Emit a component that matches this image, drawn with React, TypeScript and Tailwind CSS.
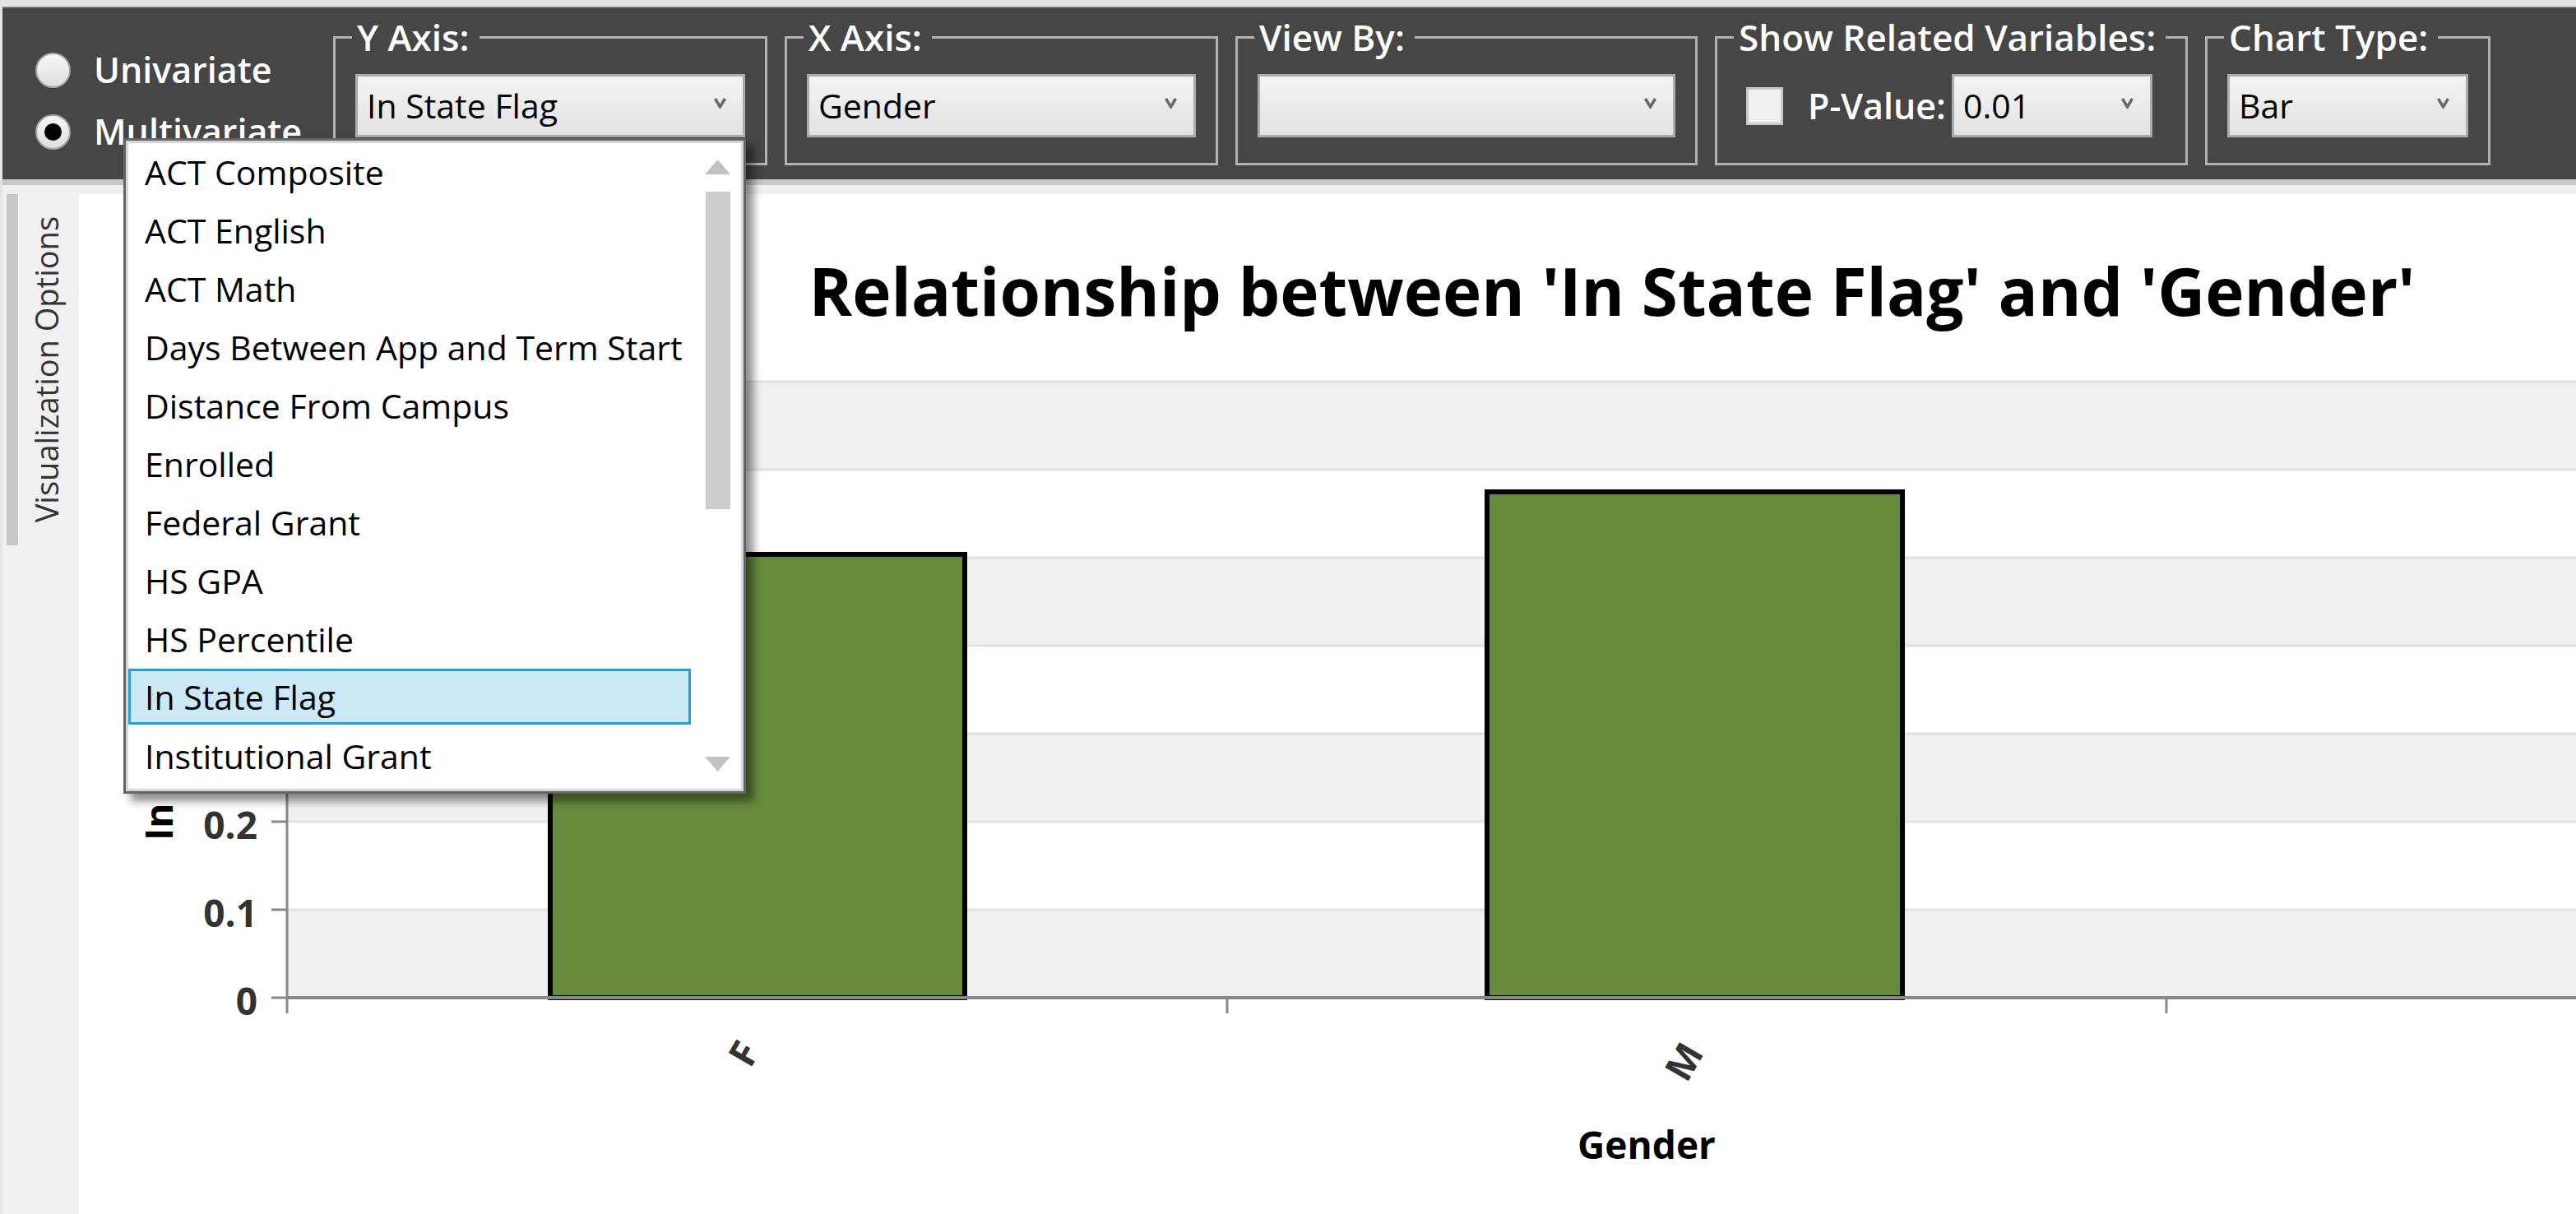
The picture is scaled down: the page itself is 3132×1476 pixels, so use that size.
import React from "react";

const items = [
  "ACT Composite",
  "ACT English",
  "ACT Math",
  "Days Between App and Term Start",
  "Distance From Campus",
  "Enrolled",
  "Federal Grant",
  "HS GPA",
  "HS Percentile",
  "In State Flag",
  "Institutional Grant",
];

function Chevron() {
  return (
    <svg width="15" height="14" viewBox="0 0 15 14" className="mb-[8px] shrink-0">
      <polyline points="1.5,2 7.5,12 13.5,2" fill="none" stroke="#6a6a6a" strokeWidth="3.5" />
    </svg>
  );
}

function Combo({ value, className }: { value: string; className?: string }) {
  return (
    <div
      className={
        "h-[77px] border-[3px] border-[#acacac] bg-gradient-to-b from-[#f3f3f3] to-[#e3e3e3] flex items-center pl-[11px] pr-[20px] " +
        (className ?? "")
      }
    >
      <span className="flex-1 text-[41px] leading-none text-black whitespace-nowrap">{value}</span>
      <Chevron />
    </div>
  );
}

function Group({ title, width, children }: { title: string; width: string; children: React.ReactNode }) {
  return (
    <fieldset className={"border-[3px] border-[#b2b2b2] " + width}>
      <legend className="ml-[20px] pl-[6px] pr-[12px] text-[44px] font-semibold leading-[56px] text-white whitespace-nowrap">
        {title}
      </legend>
      <div className="mt-[17px] mb-[31px]">{children}</div>
    </fieldset>
  );
}

function Radio({ checked, label }: { checked?: boolean; label: string }) {
  return (
    <div className="flex items-center gap-[28px] h-[56px]">
      <div className="w-[43px] h-[43px] rounded-full border-[2px] border-[#a4a4a4] bg-gradient-to-b from-[#f8f8f8] to-[#dedede] flex items-center justify-center">
        {checked && <div className="w-[21px] h-[21px] rounded-full bg-black" />}
      </div>
      <span className="text-[43px] font-semibold leading-[56px] text-white whitespace-nowrap">{label}</span>
    </div>
  );
}

function Toolbar() {
  return (
    <div className="h-[211px] border-t-2 border-[#c6c6c6] bg-[#464646] flex items-start">
      <div className="w-[402px] pl-[40px] pt-[48px] flex flex-col gap-[19px]">
        <Radio label="Univariate" />
        <Radio label="Multivariate" checked />
      </div>
      <div className="mt-[8px] flex items-start gap-[21px]">
        <Group title="Y Axis:" width="w-[528px]">
          <div className="mx-[24px]">
            <Combo value="In State Flag" />
          </div>
        </Group>
        <Group title="X Axis:" width="w-[527px]">
          <div className="mx-[24px]">
            <Combo value="Gender" />
          </div>
        </Group>
        <Group title="View By:" width="w-[562px]">
          <div className="mx-[24px]">
            <Combo value="" />
          </div>
        </Group>
        <Group title="Show Related Variables:" width="w-[575px]">
          <div className="flex items-center pl-[35px] pr-[40px]">
            <div className="w-[45px] h-[46px] border-[3px] border-[#c9c9c9] bg-[#f0f0f0] shrink-0" />
            <span className="ml-[30px] text-[43px] font-semibold leading-[56px] text-white whitespace-nowrap">
              P-Value:
            </span>
            <Combo value="0.01" className="ml-auto w-[244px] shrink-0" />
          </div>
        </Group>
        <Group title="Chart Type:" width="w-[347px]">
          <div className="mx-[24px]">
            <Combo value="Bar" />
          </div>
        </Group>
      </div>
    </div>
  );
}

const Y0 = 749;
const U = 107;
const yv = (v: number) => Y0 - v * 10 * U;

function Chart() {
  const bands = [0, 1, 2, 3, 4, 5, 6];
  const lines = [1, 2, 3, 4, 5, 6, 7];
  const ticks = [0, 1, 2, 3, 4, 5, 6, 7];
  const labels = ["0", "0.1", "0.2"];
  return (
    <svg width="3036" height="1012" viewBox="0 0 3036 1012" className="block overflow-visible">
      {bands.map((k) => (
        <rect
          key={"b" + k}
          x={253}
          y={yv((k + 1) / 10)}
          width={3600}
          height={U}
          fill={k % 2 === 0 ? "#f0f0f0" : "#ffffff"}
        />
      ))}
      {lines.map((k) => (
        <line key={"g" + k} x1={253} x2={3853} y1={yv(k / 10)} y2={yv(k / 10)} stroke="#e2e2e2" strokeWidth={3} />
      ))}
      <rect x={573} y={210} width={504} height={539} fill="#668b3c" stroke="#000" strokeWidth={6} />
      <rect x={1712} y={134} width={505} height={615} fill="#668b3c" stroke="#000" strokeWidth={6} />
      <line x1={253} x2={3853} y1={749} y2={749} stroke="#888888" strokeWidth={4} />
      <line x1={253} x2={253} y1={0} y2={768} stroke="#888888" strokeWidth={3} />
      {ticks.map((k) => (
        <line key={"t" + k} x1={234} x2={253} y1={yv(k / 10)} y2={yv(k / 10)} stroke="#888888" strokeWidth={3} />
      ))}
      <line x1={1396} x2={1396} y1={749} y2={768} stroke="#888888" strokeWidth={3} />
      <line x1={2538} x2={2538} y1={749} y2={768} stroke="#888888" strokeWidth={3} />
      {labels.map((l, k) => (
        <text
          key={"l" + k}
          x={217}
          y={yv(k / 10) + 21}
          textAnchor="end"
          fontSize={46}
          fontWeight={700}
          fill="#333333"
        >
          {l}
        </text>
      ))}
      <text transform="translate(114 558) rotate(-90)" fontSize={46} fontWeight={700} fill="#000">
        In State Flag
      </text>
      <text
        x={807}
        y={816}
        textAnchor="middle"
        dominantBaseline="central"
        transform="rotate(-60 807 816)"
        fontSize={46}
        fontWeight={700}
        fill="#333333"
      >
        F
      </text>
      <text
        x={1950}
        y={826}
        textAnchor="middle"
        dominantBaseline="central"
        transform="rotate(-60 1950 826)"
        fontSize={46}
        fontWeight={700}
        fill="#333333"
      >
        M
      </text>
      <text x={1906} y={945} textAnchor="middle" fontSize={46} fontWeight={700} fill="#000">
        Gender
      </text>
    </svg>
  );
}

function Popup() {
  return (
    <div className="absolute left-[150px] top-[168px] w-[757px] h-[797px] border-[3px] border-[#646464] bg-white shadow-[9px_9px_10px_rgba(0,0,0,0.45)]">
      <div className="h-full border-[3px] border-[#d6d6d6] flex">
        <div className="flex-1 flex flex-col">
          {items.map((it) =>
            it === "In State Flag" ? (
              <div
                key={it}
                className="h-[68px] mb-[3px] border-[3px] border-[#26a0da] bg-[#cbe8f6] flex items-center pl-[17px] text-[41px] leading-none text-black whitespace-nowrap"
              >
                {it}
              </div>
            ) : (
              <div
                key={it}
                className="h-[71px] flex items-center pl-[20px] text-[41px] leading-none text-black whitespace-nowrap"
              >
                {it}
              </div>
            )
          )}
        </div>
        <div className="w-[61px] flex flex-col items-center pt-[20px] pb-[21px] pl-[4px]">
          <svg width="31" height="18" viewBox="0 0 31 18">
            <polygon points="15.5,0 31,18 0,18" fill="#c2c2c2" />
          </svg>
          <div className="mt-[21px] w-[30px] h-[386px] bg-[#cdcdcd]" />
          <div className="flex-1" />
          <svg width="31" height="18" viewBox="0 0 31 18">
            <polygon points="0,0 31,0 15.5,18" fill="#c2c2c2" />
          </svg>
        </div>
      </div>
    </div>
  );
}

export default function App() {
  return (
    <div className="relative w-[3132px] h-[1476px] overflow-hidden bg-[#e4e4e4] font-['Open_Sans','Noto_Sans',sans-serif]">
      <div className="h-full pt-[7px] pl-[3px] flex flex-col">
        <Toolbar />
        <div className="h-[7px] bg-[#c8c8c8] shrink-0" />
        <div className="flex-1 min-h-0 flex bg-[#f0f0f0]">
          <div className="w-[93px] shrink-0 pt-[11px] flex items-start">
            <div className="ml-[5px] w-[14px] h-[427px] bg-[#c8c8c8]" />
            <div className="ml-[6px] w-[56px] h-[427px] flex items-center justify-center">
              <span className="[writing-mode:vertical-rl] rotate-180 text-[38px] leading-[56px] text-[#333333] whitespace-nowrap">
                Visualization Options
              </span>
            </div>
          </div>
          <div className="flex-1 min-w-0 pt-[11px] flex flex-col">
            <div className="flex-1 bg-white overflow-hidden">
              <div className="h-[228px] pt-[67px] pl-[692px] text-center text-[80px] font-bold leading-[100px] text-black whitespace-nowrap">
                Relationship between &apos;In State Flag&apos; and &apos;Gender&apos;
              </div>
              <Chart />
            </div>
          </div>
        </div>
      </div>
      <Popup />
    </div>
  );
}
